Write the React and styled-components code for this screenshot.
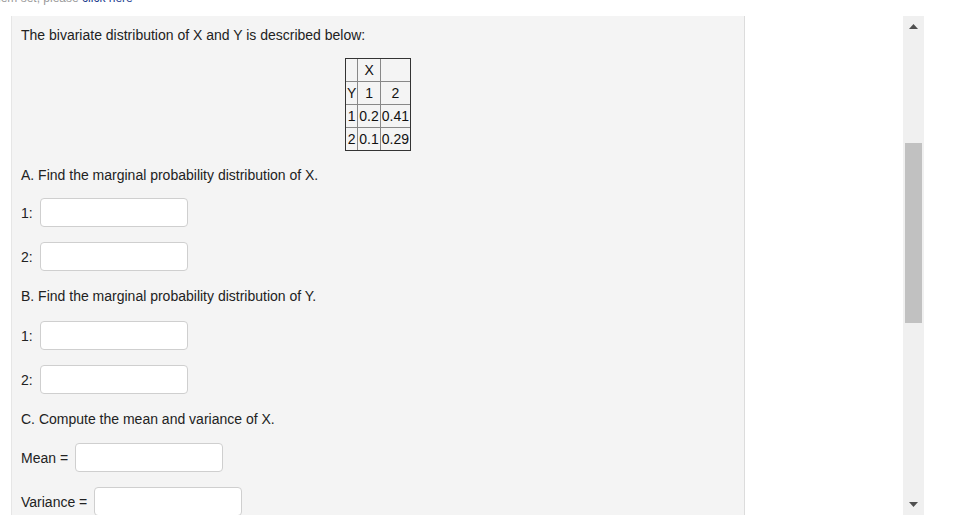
import React from "react";
import styled, { createGlobalStyle } from "styled-components";

const Global = createGlobalStyle`
  html, body { margin: 0; padding: 0; background: #ffffff; }
  body { font-family: "Liberation Sans", Arial, sans-serif; font-size: 14px; color: #222; }
`;

const TopLine = styled.div`
  height: 16px;
  overflow: hidden;
  font-size: 12px;
  line-height: 14px;
  white-space: nowrap;
`;

const TopText = styled.div`
  margin-top: -9px;
  margin-left: -2px;
  color: #9a9a9a;
`;

const Link = styled.span`
  color: #23418f;
`;

const Frame = styled.div`
  display: flex;
  width: 913px;
  height: 499px;
  margin-left: 11px;
  overflow: hidden;
  background: #ffffff;
`;

const Panel = styled.div`
  box-sizing: border-box;
  width: 734px;
  flex: none;
  background: #f4f4f4;
  border-left: 1px solid #e6e6e6;
  border-right: 1px solid #dcdcdc;
  padding: 11px 9px 0 9px;
  display: flex;
  flex-direction: column;
  align-items: flex-start;
`;

const Text = styled.div`
  line-height: 16px;
  margin-top: ${(p) => p.$mt || 0}px;
  white-space: nowrap;
`;

const TableWrap = styled.div`
  align-self: stretch;
  display: flex;
  justify-content: center;
  margin-top: 15px;
`;

const Table = styled.table`
  border-collapse: separate;
  border-spacing: 0;
  border: 1px solid #333;
  font-size: 14px;
  line-height: 16px;
  color: #111;
`;

const Cell = styled.td`
  padding: 3px 1px;
  text-align: center;
  border-left: ${(p) => (p.$first ? "none" : "1px solid #888")};
  border-top: ${(p) => (p.$top ? "none" : "1px solid #888")};
`;

const Row = styled.div`
  display: flex;
  align-items: center;
  gap: ${(p) => p.$gap || 7}px;
  margin-top: ${(p) => p.$mt || 0}px;
`;

const Label = styled.span`
  line-height: 16px;
`;

const Field = styled.input`
  box-sizing: border-box;
  width: 148px;
  height: 29px;
  border: 1px solid #cfcfcf;
  border-radius: 4px;
  background: #fff;
  margin: 0;
  padding: 0 6px;
  font: inherit;
`;

const Spacer = styled.div`
  flex: 1;
`;

const ScrollBar = styled.div`
  width: 21px;
  flex: none;
  background: #f0f0f0;
  display: flex;
  flex-direction: column;
  align-items: center;
`;

const Arrow = styled.div`
  height: 21px;
  width: 21px;
  display: flex;
  align-items: center;
  justify-content: center;
`;

const Track = styled.div`
  flex: 1;
  align-self: stretch;
  display: flex;
  flex-direction: column;
  align-items: center;
`;

const Thumb = styled.div`
  width: 17px;
  height: 180px;
  margin-top: 106px;
  background: #c1c1c1;
`;

const table = [
  ["", "X", ""],
  ["Y", "1", "2"],
  ["1", "0.2", "0.41"],
  ["2", "0.1", "0.29"],
];

export default function App() {
  return (
    <>
      <Global />
      <TopLine>
        <TopText>
          lem set, please <Link>click here</Link>
        </TopText>
      </TopLine>
      <Frame>
        <Panel>
          <Text>The bivariate distribution of X and Y is described below:</Text>
          <TableWrap>
            <Table>
              <tbody>
                {table.map((r, i) => (
                  <tr key={i}>
                    {r.map((c, j) => (
                      <Cell key={j} $first={j === 0} $top={i === 0}>
                        {c}
                      </Cell>
                    ))}
                  </tr>
                ))}
              </tbody>
            </Table>
          </TableWrap>
          <Text $mt={16}>A. Find the marginal probability distribution of X.</Text>
          <Row $mt={15}>
            <Label>1:</Label>
            <Field />
          </Row>
          <Row $mt={15}>
            <Label>2:</Label>
            <Field />
          </Row>
          <Text $mt={17}>B. Find the marginal probability distribution of Y.</Text>
          <Row $mt={17}>
            <Label>1:</Label>
            <Field />
          </Row>
          <Row $mt={15}>
            <Label>2:</Label>
            <Field />
          </Row>
          <Text $mt={17}>C. Compute the mean and variance of X.</Text>
          <Row $mt={16}>
            <Label>Mean =</Label>
            <Field />
          </Row>
          <Row $mt={15}>
            <Label>Variance =</Label>
            <Field />
          </Row>
        </Panel>
        <Spacer />
        <ScrollBar>
          <Arrow>
            <svg width="9" height="5" viewBox="0 0 9 5">
              <polygon points="0,5 9,5 4.5,0" fill="#505050" />
            </svg>
          </Arrow>
          <Track>
            <Thumb />
          </Track>
          <Arrow>
            <svg width="9" height="5" viewBox="0 0 9 5">
              <polygon points="0,0 9,0 4.5,5" fill="#505050" />
            </svg>
          </Arrow>
        </ScrollBar>
      </Frame>
    </>
  );
}
